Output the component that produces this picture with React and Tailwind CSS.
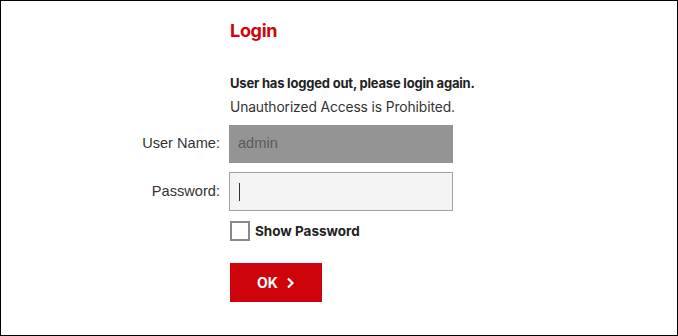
import React, { useState } from 'react';

export default function App() {
  const [show, setShow] = useState(false);

  return (
    <div className="w-[678px] h-[336px] border border-black bg-white font-['Liberation_Sans',Arial,sans-serif] text-[#333]">
      <div className="pl-[229px] pt-[19px]">
        <h1 className="font-['Inter',sans-serif] font-bold text-[18px] leading-[22px] tracking-[-0.3px] text-[#cd040b]">Login</h1>
        <p className="mt-[33px] font-['Inter',sans-serif] font-bold text-[13px] leading-[16px] tracking-[-0.2px] text-[#222]">
          User has logged out, please login again.
        </p>
        <p className="mt-[7px] font-['Inter',sans-serif] text-[13.8px] leading-[18px] tracking-[-0.1px] text-[#333]">
          Unauthorized Access is Prohibited.
        </p>
      </div>

      <div className="mt-[9px] flex flex-col gap-[9px]">
        <div className="flex items-center">
          <label className="w-[219px] text-right text-[14.6px] text-[#333]">User Name:</label>
          <div className="w-[224px] h-[38px] ml-[9px] bg-[#949494] flex items-center pl-[9px] text-[14.6px] text-[#5a5a5a]">
            admin
          </div>
        </div>
        <div className="flex items-center">
          <label className="w-[219px] text-right text-[14.6px] text-[#333]">Password:</label>
          <div className="w-[224px] h-[39px] ml-[9px] bg-[#f4f4f4] border border-[#a0a0a0] flex items-center pl-[9px]">
            <span className="w-px h-[18px] bg-[#333]" />
          </div>
        </div>
      </div>

      <div className="pl-[229px] mt-[10px] flex items-center">
        <button
          onClick={() => setShow(!show)}
          className="w-[20px] h-[20px] border-2 border-[#8a8a8a] bg-white"
        />
        <span className="ml-[5px] font-['Inter',sans-serif] font-bold text-[13.5px] text-[#222]">Show Password</span>
      </div>

      <div className="pl-[229px] mt-[22px]">
        <button className="w-[92px] h-[39px] bg-[#cd040b] flex items-center justify-center gap-[8px] text-white font-['Inter',sans-serif] font-bold text-[14px]">
          OK
          <svg width="9" height="12" viewBox="0 0 9 12" fill="none">
            <path d="M2 1.5 L6.5 6 L2 10.5" stroke="white" strokeWidth="2.2" />
          </svg>
        </button>
      </div>
    </div>
  );
}
